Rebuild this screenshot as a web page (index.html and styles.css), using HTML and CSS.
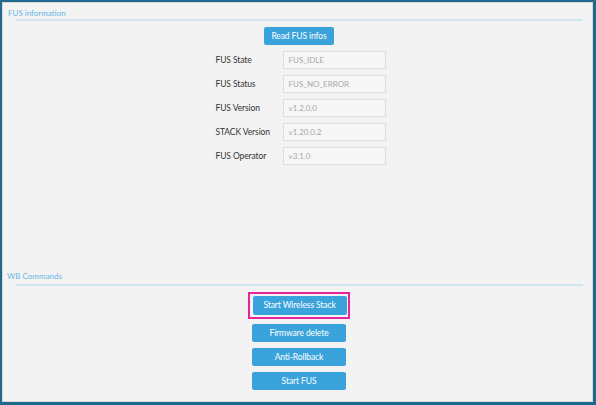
FILE: index.html
```html
<!DOCTYPE html>
<html>
<head>
<meta charset="utf-8">
<link rel="stylesheet" href="styles.css">
</head>
<body>
<div class="frame">
  <div class="inner">
    <section class="fus">
      <div class="sec-title">FUS information</div>
      <div class="sec-line"></div>
      <div class="fus-body">
        <button class="btn btn-read">Read FUS infos</button>
        <div class="fields">
          <div class="label">FUS State</div><div class="field">FUS_IDLE</div>
          <div class="label">FUS Status</div><div class="field">FUS_NO_ERROR</div>
          <div class="label">FUS Version</div><div class="field">v1.2.0.0</div>
          <div class="label">STACK Version</div><div class="field">v1.20.0.2</div>
          <div class="label">FUS Operator</div><div class="field">v3.1.0</div>
        </div>
      </div>
    </section>
    <section class="wb">
      <div class="sec-title">WB Commands</div>
      <div class="sec-line"></div>
      <div class="wb-body">
        <div class="highlight"><button class="btn btn-cmd">Start Wireless Stack</button></div>
        <button class="btn btn-cmd">Firmware delete</button>
        <button class="btn btn-cmd">Anti-Rollback</button>
        <button class="btn btn-cmd">Start FUS</button>
      </div>
    </section>
  </div>
</div>
</body>
</html>
```
FILE: styles.css
```css
* { box-sizing: border-box; }
html, body { margin: 0; padding: 0; }
body {
  width: 596px;
  height: 405px;
  font-family: Lato, "Open Sans", sans-serif;
  background: #f3f3f3;
}
.frame {
  width: 596px;
  height: 405px;
  border-style: solid;
  border-color: #1f6a8c;
  border-width: 2px 3px 3px 2px;
}
.inner {
  height: 100%;
  border: 1px solid #d9d9d9;
  background: #f3f3f3;
  display: flex;
  flex-direction: column;
}
.fus { flex: 1; }
.sec-title {
  font-size: 8px;
  line-height: 10px;
  height: 10px;
  color: #66b5e4;
}
.fus .sec-title { margin: 5px 0 0 5px; }
.wb .sec-title { margin: 0 0 0 4px; }
.sec-line {
  height: 2px;
  background: #d2e6f1;
  margin: 1px 9px 0 13px;
}
.wb .sec-line { margin-top: 3px; }
.fus-body, .wb-body {
  display: flex;
  flex-direction: column;
  align-items: center;
  padding-left: 3px;
}
.fus-body { padding-top: 6px; gap: 6px; }
.wb-body { padding-top: 6px; padding-bottom: 11px; }
.btn {
  font-family: inherit;
  font-size: 8.5px;
  letter-spacing: -0.1px;
  color: #ffffff;
  background: #3aa3db;
  border: none;
  border-radius: 2px;
  padding: 0;
  height: 18px;
  line-height: 18px;
}
.btn-read { width: 70px; }
.btn-cmd { width: 94px; }
.wb-body .btn-cmd { margin-top: 6px; }
.wb-body .highlight + .btn-cmd { margin-top: 5px; }
.highlight {
  border: 2px solid #e8239c;
  padding: 2px 1px 2px 3px;
  margin-left: -1px;
}
.highlight .btn-cmd { margin: 0; height: 19px; line-height: 19px; display: block; }
.fields {
  display: grid;
  grid-template-columns: 67px 103px;
  row-gap: 6px;
  margin-left: 3px;
}
.label {
  font-size: 8.5px;
  letter-spacing: -0.1px;
  line-height: 18px;
  color: #333333;
}
.field {
  height: 18px;
  line-height: 16px;
  border: 1px solid #dedede;
  background: #f6f6f6;
  font-size: 8px;
  color: #a9a9a9;
  padding-left: 5px;
}
```
